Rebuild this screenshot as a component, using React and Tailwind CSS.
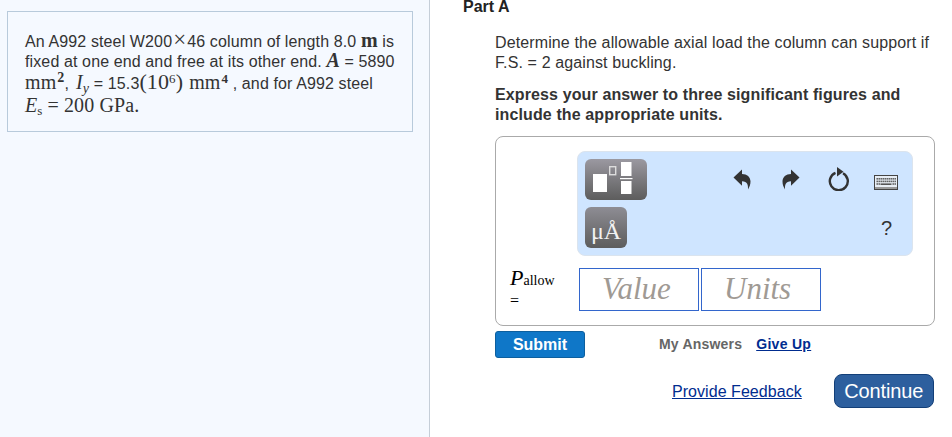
const sans = { fontFamily: '"Liberation Sans", Arial, sans-serif' };

function Mi({ children, className = "" }) {
  return <span className={`font-['Liberation_Serif',serif] ${className}`}>{children}</span>;
}

function UndoIcon({ flip }) {
  return (
    <svg width="18" height="21" viewBox="0 0 18 21" className={flip ? "-scale-x-100" : ""}>
      <path d="M0.5 8.5 L9 0.5 V5 C14 5 17.5 8 17.5 12.5 C17.5 15.5 16.5 18 15 20.5 C15.3 16 14.5 12.5 9 12.2 V16.8 Z" fill="#333" />
    </svg>
  );
}

function RedoCircle() {
  return (
    <svg width="22" height="24" viewBox="0 0 22 24">
      <path d="M7.5 5.8 A9 9 0 1 0 15 6.2" fill="none" stroke="#333" strokeWidth="2.4" />
      <path d="M9 0 L15.5 4.8 L9 9.5 Z" fill="#333" />
    </svg>
  );
}

function KeyboardIcon() {
  const keys = [];
  for (let r = 0; r < 3; r++) {
    for (let c = 0; c < 10; c++) {
      if (r === 2 && c > 1 && c < 8) continue;
      keys.push(<rect key={`${r}-${c}`} x={2.5 + c * 2} y={3 + r * 2.6} width="1.4" height="1.6" fill="#555" />);
    }
  }
  return (
    <svg width="24" height="15" viewBox="0 0 24 15">
      <rect x="0.5" y="0.5" width="23" height="14" fill="#e8eef5" stroke="#444" />
      {keys}
      <rect x="6.5" y="8.4" width="11" height="1.6" fill="#555" />
      <rect x="1" y="12" width="22" height="2" fill="#999" />
    </svg>
  );
}

function TemplateIcon() {
  return (
    <svg width="46" height="35" viewBox="0 0 46 35">
      <rect x="0" y="12" width="14" height="18" fill="#fff" />
      <rect x="16.7" y="4.7" width="6" height="8" fill="none" stroke="#ddd" strokeWidth="1.4" />
      <rect x="28" y="0" width="10.5" height="14" fill="#fff" />
      <rect x="27" y="16" width="12.5" height="1.2" fill="#fff" />
      <rect x="28" y="19" width="10.5" height="13" fill="#fff" />
    </svg>
  );
}

export default function App() {
  return (
    <div className="flex w-[952px] h-[437px] overflow-hidden bg-white text-[#333]" style={sans}>
      <div className="w-[430px] shrink-0 bg-[#f5f9ff] border-r border-[#c5ced8] pt-[11px] pl-[7px]">
        <div className="w-[406px] h-[121px] border border-[#b8cadb] pl-[17px] pt-[17px] text-[16px] leading-[21px] tracking-[0.12px]">
          <div className="whitespace-nowrap h-[21px]">
            An A992 steel W200<Mi className="text-[23px] leading-[21px] mx-[1px]">×</Mi>46 column of length 8.0 <Mi className="text-[20px] leading-[21px] font-bold">m</Mi> is
          </div>
          <div className="whitespace-nowrap h-[21px]">
            fixed at one end and free at its other end. <Mi className="italic font-bold text-[20px] leading-[21px]">A</Mi> = 5890
          </div>
          <div className="whitespace-nowrap h-[21px]">
            <Mi className="text-[20px] leading-[21px]">mm<sup className="text-[14px] font-bold ml-[1px]">2</sup></Mi>,<Mi className="ml-[7px] italic text-[20px] leading-[21px]">I<sub className="text-[14px]">y</sub></Mi> = 15.3<Mi className="text-[22px] leading-[21px]">(10<sup className="text-[13px]">6</sup>)</Mi><Mi className="ml-[6px] text-[20px] leading-[21px]">mm<sup className="text-[13px] font-bold ml-[1px]">4</sup></Mi> , and for A992 steel
          </div>
          <div className="whitespace-nowrap mt-[3px]">
            <Mi className="text-[20px] leading-[21px]"><i>E</i><sub className="text-[13px]">s</sub><span className="mx-[5px]">=</span>200 GPa.</Mi>
          </div>
        </div>
      </div>

      <div className="flex-1 pl-[33px] -mt-[2px]">
        <div className="text-[16px] font-bold leading-[18px] text-[#222]">Part A</div>
        <div className="ml-[32px] w-[440px]">
          <p className="mt-[17px] text-[16px] leading-[20px] tracking-[0.12px]">
            Determine the allowable axial load the column can support if
            <br />
            F.S. = 2 against buckling.
          </p>
          <p className="mt-[12px] text-[16px] leading-[20px] font-bold tracking-[0.12px]">
            Express your answer to three significant figures and
            <br />
            include the appropriate units.
          </p>
          <div className="mt-[11px] h-[190px] border border-[#aaa] rounded-lg flex pl-[14px] pt-[14px]">
            <div className="w-[67px] pt-[114px] text-black">
              <Mi className="text-[22px] italic leading-[26px]">P</Mi>
              <Mi className="text-[14px] leading-[14px]">allow</Mi>
              <div className="font-['Liberation_Serif',serif] text-[16px] leading-[16px] mt-[1px]">=</div>
            </div>
            <div>
              <div className="w-[336px] h-[105px] rounded-lg bg-[#cfe5ff] border border-[#dbe4ee] p-[7px] relative flex flex-col gap-[7px]">
                <button className="w-[62px] h-[41px] rounded-[6px] bg-gradient-to-b from-[#9b99a1] to-[#5d5d5d] flex items-center justify-center">
                  <TemplateIcon />
                </button>
                <button className="w-[42px] h-[41px] rounded-[6px] bg-gradient-to-b from-[#8e8d94] to-[#5d5d5d] flex items-end justify-center pb-[2px] text-[#f2f2f2] text-[24px] leading-[30px] font-['Liberation_Serif',serif]">
                  μÅ
                </button>
                <div className="absolute left-[155px] top-[17px]"><UndoIcon /></div>
                <div className="absolute left-[204px] top-[17px]"><UndoIcon flip /></div>
                <div className="absolute left-[250px] top-[15px]"><RedoCircle /></div>
                <div className="absolute left-[296px] top-[23px]"><KeyboardIcon /></div>
                <div className="absolute left-[303px] top-[65px] text-[20px] leading-[22px] text-[#333]">?</div>
              </div>
              <div className="flex gap-[2px] ml-[2px] mt-[12px] font-['Liberation_Serif',serif] italic text-[31px] text-[#9f9a94]">
                <div className="w-[120px] h-[43px] border border-[#3366cc] pl-[22px] leading-[40px]">Value</div>
                <div className="w-[120px] h-[43px] border border-[#3366cc] pl-[22px] leading-[40px]">Units</div>
              </div>
            </div>
          </div>
          <div className="mt-[5px] flex items-center">
            <button className="w-[90px] h-[27px] rounded-[3px] bg-[#0f77c8] border border-[#0d5f9e] text-white font-bold text-[16px]">
              Submit
            </button>
            <span className="ml-[74px] text-[14px] font-bold text-[#666] tracking-[0.2px]">My Answers</span>
            <a className="ml-[14px] text-[14px] font-bold text-[#002c8f] underline tracking-[0.3px]">Give Up</a>
          </div>
          <div className="mt-[16px] flex items-center">
            <a className="ml-[177px] pt-[1px] text-[16px] text-[#002c8f] underline tracking-[0.05px]">Provide Feedback</a>
            <button className="ml-[32px] w-[100px] h-[34px] rounded-lg bg-[#2d5f9e] border border-[#133f78] text-white text-[20px] tracking-[-0.1px]">
              Continue
            </button>
          </div>
        </div>
      </div>
    </div>
  );
}
